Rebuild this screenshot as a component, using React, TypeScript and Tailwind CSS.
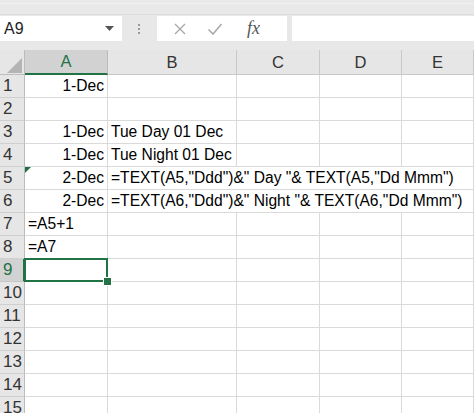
import React from "react";

const cols = [
  { key: "A", w: "w-[83px]" },
  { key: "B", w: "w-[129px]" },
  { key: "C", w: "w-[83px]" },
  { key: "D", w: "w-[82px]" },
  { key: "E", w: "flex-1" },
];

type Cell = { text?: string; align?: "left" | "right"; span?: number; flag?: boolean };

const rows: Record<number, Record<string, Cell>> = {
  1: { A: { text: "1-Dec", align: "right" } },
  3: { A: { text: "1-Dec", align: "right" }, B: { text: "Tue Day 01 Dec" } },
  4: { A: { text: "1-Dec", align: "right" }, B: { text: "Tue Night 01 Dec" } },
  5: {
    A: { text: "2-Dec", align: "right", flag: true },
    B: { text: '=TEXT(A5,"Ddd")&" Day "& TEXT(A5,"Dd Mmm")', span: 4 },
  },
  6: {
    A: { text: "2-Dec", align: "right" },
    B: { text: '=TEXT(A6,"Ddd")&" Night "& TEXT(A6,"Dd Mmm")', span: 4 },
  },
  7: { A: { text: "=A5+1" } },
  8: { A: { text: "=A7" } },
};

function Row({ n }: { n: number }) {
  const data = rows[n] || {};
  const selected = n === 9;
  const out: React.ReactNode[] = [];
  for (let i = 0; i < cols.length; i++) {
    const c = cols[i];
    const cell = data[c.key];
    if (cell?.span) {
      out.push(
        <div
          key={c.key}
          className="flex-1 h-full border-r border-b border-[#dadada] flex items-center px-[3px] whitespace-nowrap overflow-visible"
        >
          {cell.text}
        </div>
      );
      break;
    }
    out.push(
      <div
        key={c.key}
        className={`${c.w} shrink-0 h-full border-r border-b border-[#dadada] flex items-center px-[3px] relative whitespace-nowrap ${
          cell?.align === "right" ? "justify-end" : "justify-start"
        }`}
      >
        {cell?.flag && (
          <span className="absolute left-0 top-0 w-0 h-0 border-t-[6px] border-r-[6px] border-t-[#1e7145] border-r-transparent" />
        )}
        {selected && c.key === "A" && (
          <>
            <span className="absolute -left-px -top-px right-[-1px] bottom-[-1px] border-2 border-[#217346] z-10" />
            <span className="absolute right-[-4px] bottom-[-4px] w-[7px] h-[7px] bg-[#217346] outline outline-1 outline-white z-20" />
          </>
        )}
        {cell?.text}
      </div>
    );
  }
  return (
    <div className="flex h-[23px]">
      <div
        className={`w-[25px] shrink-0 h-full flex items-center pl-[3px] text-[17px] border-b ${
          selected
            ? "bg-[#d2d2d2] text-[#217346] border-r-2 border-r-[#217346] border-b-[#c6c6c6]"
            : "bg-[#e6e6e6] text-[#333] border-r border-r-[#bcbcbc] border-b-[#d0d0d0]"
        }`}
      >
        {n}
      </div>
      {out}
    </div>
  );
}

export default function App() {
  return (
    <div
      className="w-[474px] h-[413px] overflow-hidden bg-white text-[15.6px] text-black"
      style={{ fontFamily: '"Liberation Sans", Arial, sans-serif' }}
    >
      {/* ribbon edge */}
      <div className="h-[15px] bg-[#e9e9e9] border-b border-[#dcdcdc] pt-[3px]">
        <div className="h-px bg-[#f3f3f3]" />
      </div>

      {/* formula bar */}
      <div className="h-[35px] bg-[#e8e8e8] flex items-start pt-px">
        <div className="w-[122px] h-[25px] bg-white flex items-center pl-[4px] pr-[8px] text-[16px] text-[#222]">
          <span className="flex-1">A9</span>
          <svg width="9" height="5" viewBox="0 0 9 5">
            <path d="M0 0h9L4.5 5z" fill="#555" />
          </svg>
        </div>
        <div className="w-[36px] h-[25px] flex flex-col items-center justify-center gap-[2px] -ml-[1px]">
          <span className="w-[2px] h-[2px] bg-[#999]" />
          <span className="w-[2px] h-[2px] bg-[#999]" />
          <span className="w-[2px] h-[2px] bg-[#999]" />
        </div>
        <div className="w-[130px] h-[25px] bg-white flex items-center">
          <svg width="14" height="14" viewBox="0 0 14 14" className="ml-[16px]">
            <path d="M2 2L12 12M12 2L2 12" stroke="#aaa" strokeWidth="1.4" />
          </svg>
          <svg width="16" height="14" viewBox="0 0 16 14" className="ml-[20px]">
            <path d="M1.5 7.5L6 12L14.5 2" stroke="#aaa" strokeWidth="1.6" fill="none" />
          </svg>
          <span
            className="ml-[24px] text-[18px] italic text-[#555]"
            style={{ fontFamily: '"Liberation Serif", "Times New Roman", serif' }}
          >
            fx
          </span>
        </div>
        <div className="ml-[5px] flex-1 h-[25px] bg-white" />
      </div>

      {/* column headers */}
      <div className="flex h-[25px] bg-[#e6e6e6] text-[16.5px] text-[#333]">
        <div className="w-[25px] shrink-0 h-full border-r border-b border-[#bcbcbc] relative">
          <svg width="25" height="25" viewBox="0 0 25 25" className="absolute inset-0">
            <path d="M7 23H22V8z" fill="#b4b4b4" />
          </svg>
        </div>
        {cols.map((c) => (
          <div
            key={c.key}
            className={`${c.w} shrink-0 h-full flex items-center justify-center ${
              c.key === "A"
                ? "bg-[#d2d2d2] text-[#217346] border-b-2 border-b-[#217346] border-r border-r-[#bcbcbc]"
                : "border-r border-b border-[#c8c8c8]"
            }`}
          >
            {c.key}
          </div>
        ))}
      </div>

      {Array.from({ length: 15 }, (_, i) => (
        <Row key={i + 1} n={i + 1} />
      ))}
    </div>
  );
}
